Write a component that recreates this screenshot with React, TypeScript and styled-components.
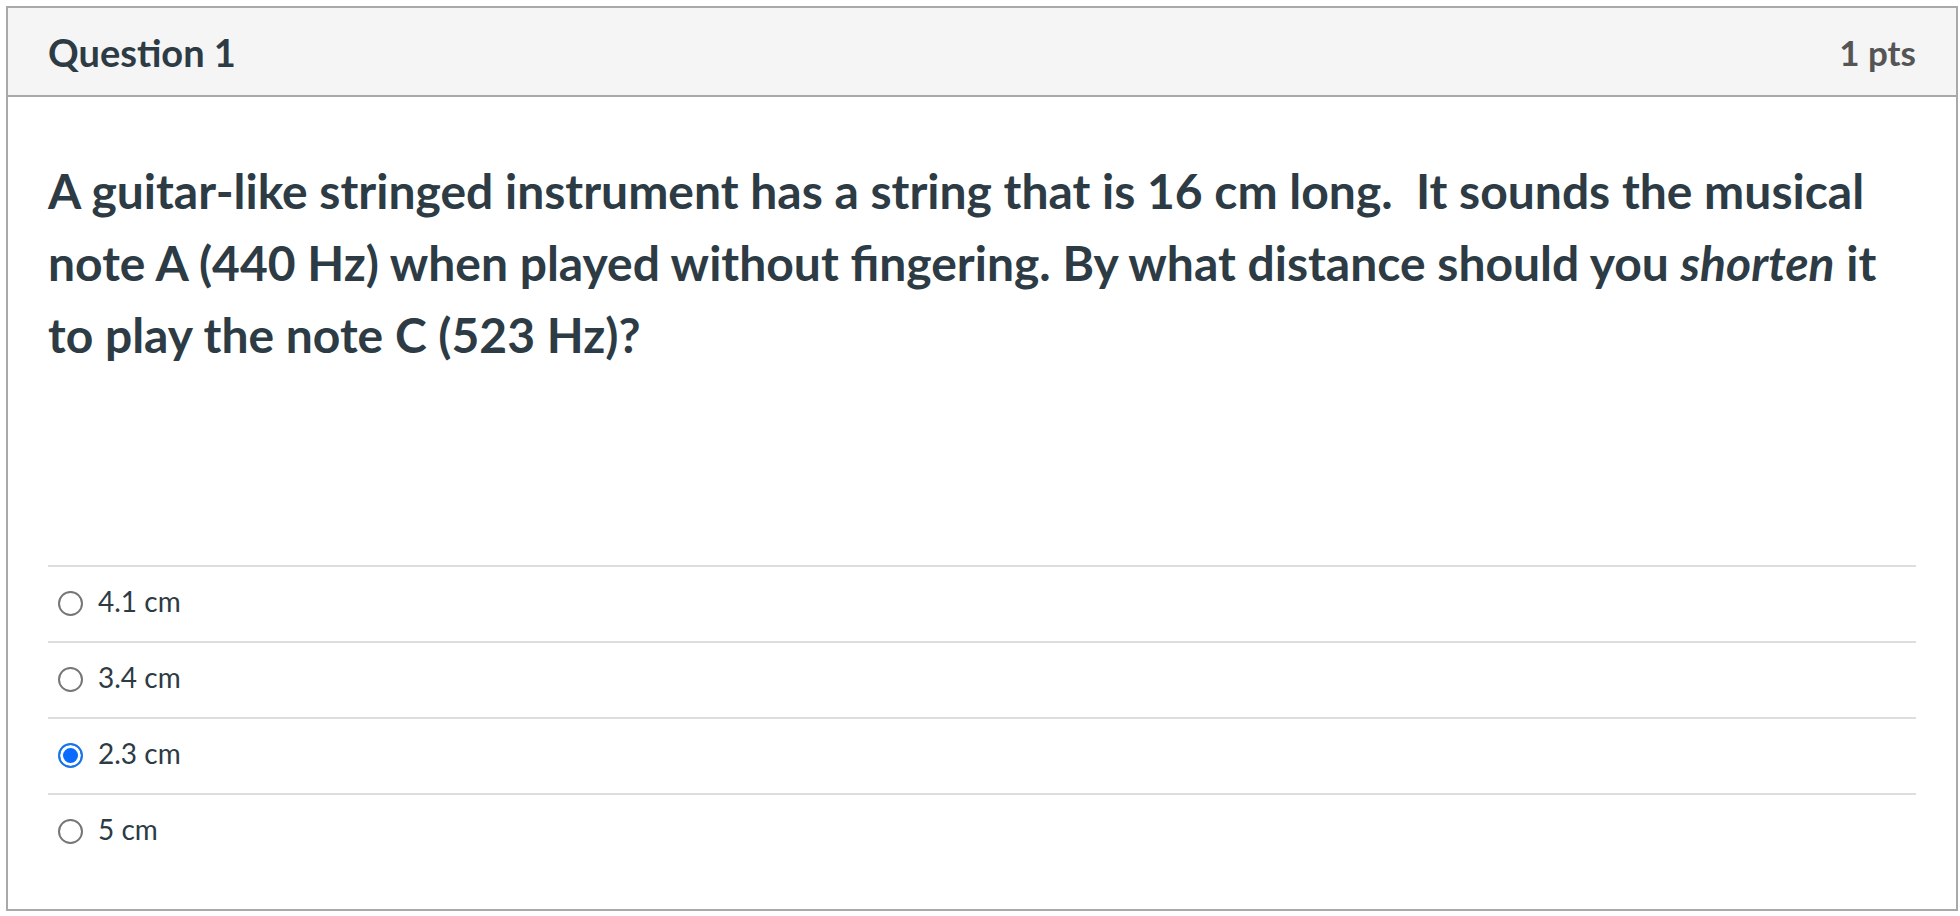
import React from "react";
import styled, { createGlobalStyle } from "styled-components";

const Global = createGlobalStyle`
  html, body { margin: 0; padding: 0; background: #ffffff; }
  body { font-family: Lato, "Noto Sans", sans-serif; color: #2d3b45; }
`;

const Page = styled.div`
  padding: 6px 2px 6px 6px;
`;

const Card = styled.section`
  border: 2px solid #a9a9a9;
  background: #ffffff;
`;

const Header = styled.header`
  display: flex;
  align-items: center;
  justify-content: space-between;
  height: 87px;
  padding: 0 40px;
  background: #f5f5f5;
  border-bottom: 2px solid #a9a9a9;
`;

const Title = styled.h2`
  margin: 0;
  font-family: Lato, sans-serif;
  font-weight: 700;
  font-size: 38px;
  color: #2d3b45;
`;

const Points = styled.span`
  font-family: Lato, sans-serif;
  font-weight: 700;
  font-size: 35px;
  color: #555555;
`;

const Body = styled.div`
  padding: 58px 40px 40px;
`;

const QuestionText = styled.p`
  margin: 0 0 194px;
  font-family: Lato, sans-serif;
  font-weight: 700;
  font-size: 48px;
  line-height: 72px;
  color: #2d3b45;
  white-space: pre-wrap;
`;

const Answers = styled.div`
  display: flex;
  flex-direction: column;
`;

const Row = styled.label`
  display: flex;
  align-items: center;
  gap: 15px;
  box-sizing: border-box;
  height: 76px;
  padding-left: 10px;
  padding-bottom: 6px;
  border-top: 2px solid #dddddd;
`;

const Radio = styled.span<{ $checked?: boolean }>`
  box-sizing: border-box;
  flex: none;
  width: 25px;
  height: 25px;
  margin-top: 4px;
  border-radius: 50%;
  border: 2px solid ${(p) => (p.$checked ? "#1a73e8" : "#767676")};
  background: ${(p) => (p.$checked ? "#0a6cff" : "#fff")};
  box-shadow: ${(p) => (p.$checked ? "inset 0 0 0 3px #ffffff" : "none")};
`;

const AnswerText = styled.span`
  font-family: Lato, sans-serif;
  font-weight: 400;
  font-size: 28px;
  color: #2d3b45;
`;

const answers = [
  { text: "4.1 cm", checked: false },
  { text: "3.4 cm", checked: false },
  { text: "2.3 cm", checked: true },
  { text: "5 cm", checked: false },
];

export default function App() {
  return (
    <Page>
      <Global />
      <Card>
        <Header>
          <Title>Question 1</Title>
          <Points>1 pts</Points>
        </Header>
        <Body>
          <QuestionText>
            A guitar-like stringed instrument has a string that is 16 cm long.{"  "}It sounds the musical note A (440 Hz) when played without fingering. By what distance should you <em>shorten</em> it to play the note C (523 Hz)?
          </QuestionText>
          <Answers>
            {answers.map((a) => (
              <Row key={a.text}>
                <Radio $checked={a.checked} />
                <AnswerText>{a.text}</AnswerText>
              </Row>
            ))}
          </Answers>
        </Body>
      </Card>
    </Page>
  );
}
